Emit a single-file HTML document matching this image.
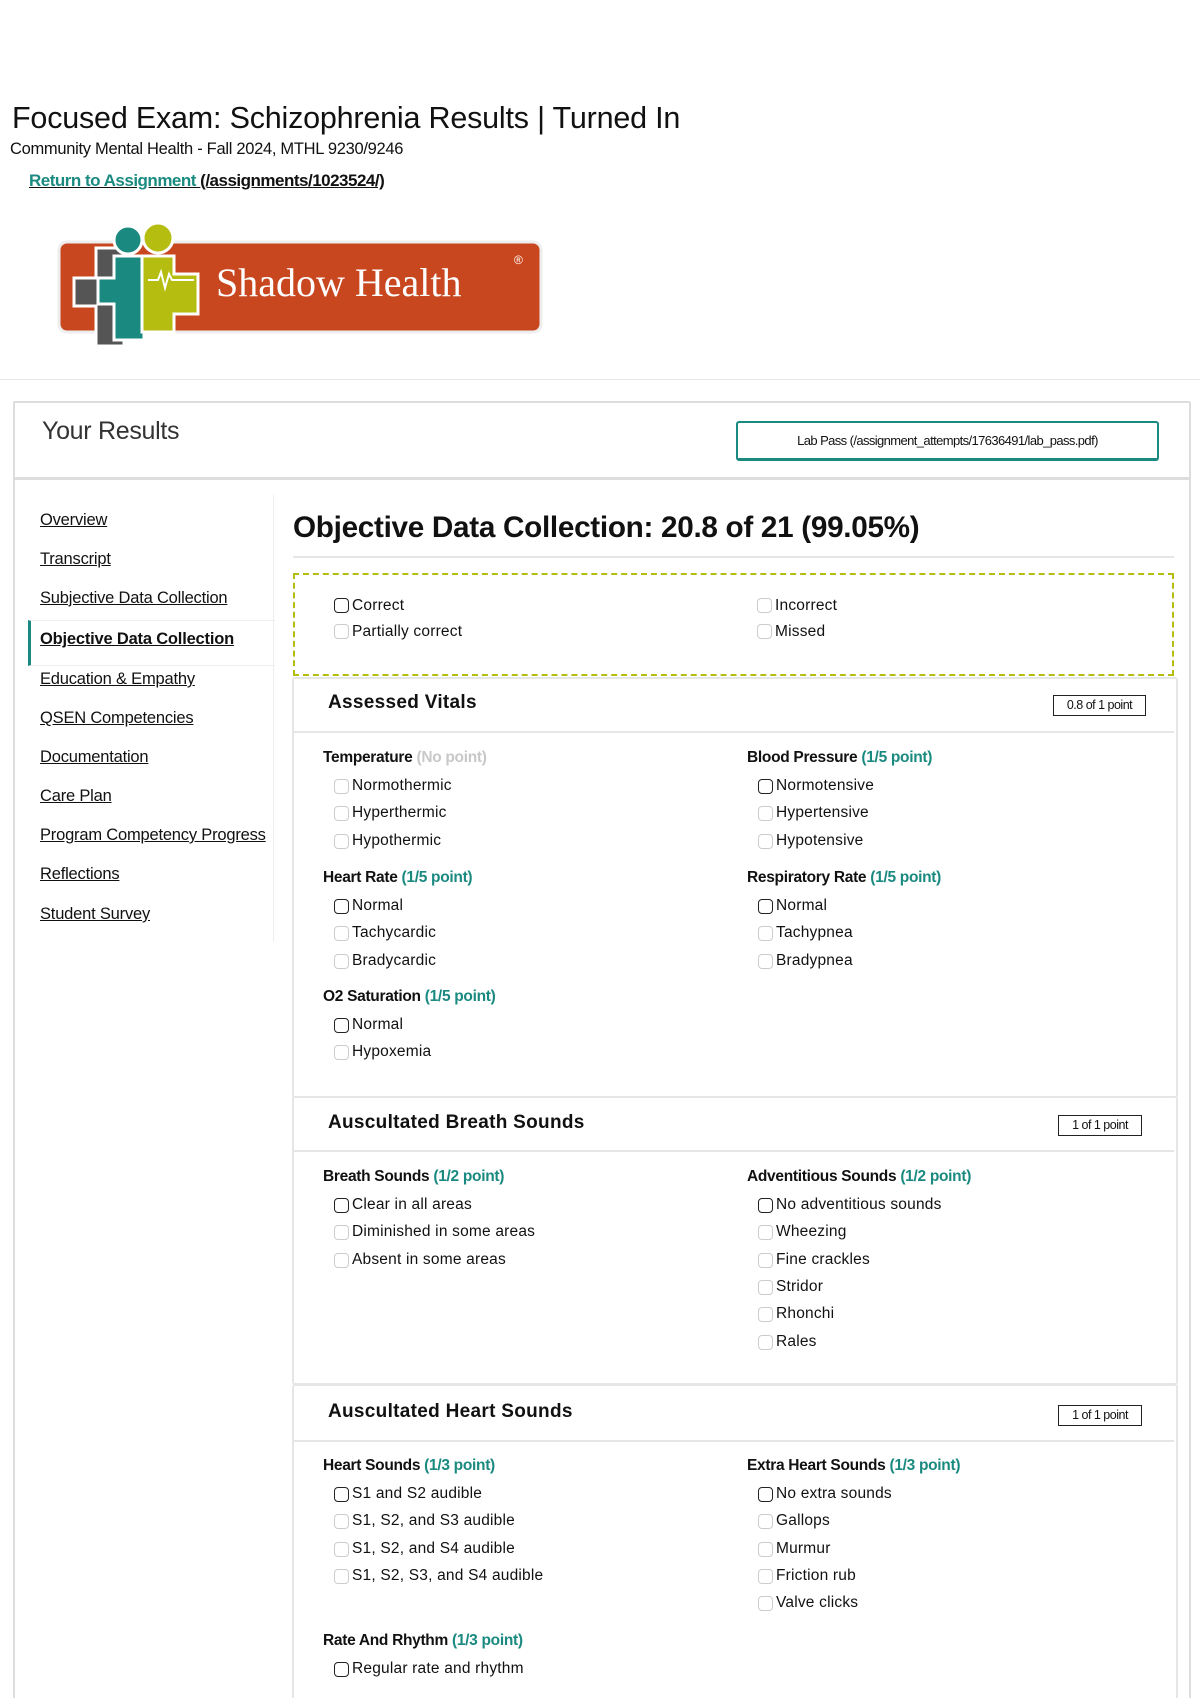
<!DOCTYPE html>
<html style="margin:0;height:1698px;overflow:hidden"><head><meta charset="utf-8"><style>
body{margin:0;width:1200px;height:1698px;background:#fff;font-family:"Liberation Sans",sans-serif;color:#111;overflow:hidden}
#w{position:relative;width:1200px;height:1698px;overflow:hidden}
.a{position:absolute;white-space:nowrap}
.cb{position:absolute;width:13px;height:13px;border:1.5px solid #ccc;border-radius:4px;background:#fff}
.cb.on{border-color:#222}
.t{font-size:15.5px;letter-spacing:0.2px}
.lbl{font-size:15.5px;font-weight:bold;letter-spacing:-0.3px}
.g{color:#1a8a80}
.gr{color:#c8c8c8}
.nav{font-size:16.5px;text-decoration:underline;color:#111;letter-spacing:-0.2px}
.badge{position:absolute;border:1.5px solid #222;font-size:12.5px;text-align:center;line-height:19px;letter-spacing:-0.5px}
.card{position:absolute;left:292px;width:882px;border:2px solid #e6e6e6;border-radius:3px}
.ct{font-size:19px;font-weight:bold;letter-spacing:0.3px}
</style></head><body><div id="w">
<div class="a" style="left:12px;top:101px;font-size:30.5px;letter-spacing:-0.2px">Focused Exam: Schizophrenia Results | Turned In</div>
<div class="a" style="left:10px;top:140px;font-size:16.5px;letter-spacing:-0.3px">Community Mental Health - Fall 2024, MTHL 9230/9246</div>
<div class="a" style="left:29px;top:171px;font-size:17px;font-weight:bold;text-decoration:underline;letter-spacing:-0.5px"><span style="color:#1a8a80">Return to Assignment </span>(/assignments/1023524/)</div>
<svg class="a" style="left:56px;top:218px" width="490" height="132" viewBox="0 0 490 132">
<rect x="3" y="24" width="482" height="90" rx="8" fill="#c8471f" stroke="#eee" stroke-width="3"/>
<path d="M40 30h28v30h18v28H68v40H40V88H18V60h22z" fill="#555" stroke="#fff" stroke-width="3"/>
<circle cx="72" cy="22" r="14" fill="#1a8a80" stroke="#fff" stroke-width="3"/>
<path d="M58 38h30v22h16v26H88v36H58V86H42V60h16z" fill="#1a8a80" stroke="#fff" stroke-width="3"/>
<circle cx="102" cy="20" r="15" fill="#b5bd10" stroke="#fff" stroke-width="3"/>
<path d="M86 38h32v18h24v40h-24v18H86z" fill="#b5bd10" stroke="#fff" stroke-width="3"/>
<path d="M92 62h10l3-8 4 16 4-14 3 6h22" fill="none" stroke="#fff" stroke-width="2"/>
<text x="160" y="78" font-family="Liberation Serif,serif" font-size="40" fill="#fff">Shadow Health</text>
<text x="458" y="46" font-size="12" fill="#fff">®</text>
</svg>
<div class="a" style="left:0;top:379px;width:1200px;height:1px;background:#e6e6e6"></div>
<div class="a" style="left:13px;top:401px;width:1174px;height:1400px;border:2px solid #ddd;border-radius:2px"></div>
<div class="a" style="left:42px;top:417px;font-size:25px;color:#333;letter-spacing:-0.3px">Your Results</div>
<div class="a" style="left:736px;top:421px;width:419px;height:35px;border:2px solid #1a8a80;border-bottom-width:3px;border-radius:3px;font-size:13px;line-height:35px;text-align:center;letter-spacing:-0.6px">Lab Pass (/assignment_attempts/17636491/lab_pass.pdf)</div>
<div class="a" style="left:15px;top:477px;width:1174px;height:3px;background:#ddd"></div>
<div class="a" style="left:273px;top:495px;width:1px;height:447px;background:#eee"></div>
<div class="a" style="left:28px;top:620px;width:244px;height:44px;border-left:3px solid #1a8a80;border-top:1px solid #eee;border-bottom:1px solid #eee"></div>
<div class="a nav" style="left:40px;top:511px">Overview</div>
<div class="a nav" style="left:40px;top:550px">Transcript</div>
<div class="a nav" style="left:40px;top:589px">Subjective Data Collection</div>
<div class="a nav" style="left:40px;top:630px;font-weight:bold">Objective Data Collection</div>
<div class="a nav" style="left:40px;top:670px">Education &amp; Empathy</div>
<div class="a nav" style="left:40px;top:709px">QSEN Competencies</div>
<div class="a nav" style="left:40px;top:748px">Documentation</div>
<div class="a nav" style="left:40px;top:787px">Care Plan</div>
<div class="a nav" style="left:40px;top:826px">Program Competency Progress</div>
<div class="a nav" style="left:40px;top:865px">Reflections</div>
<div class="a nav" style="left:40px;top:905px">Student Survey</div>
<div class="a" style="left:293px;top:511px;font-size:29.7px;font-weight:bold;letter-spacing:-0.3px">Objective Data Collection: 20.8 of 21 (99.05%)</div>
<div class="a" style="left:293px;top:556px;width:881px;height:2px;background:#e6e6e6"></div>
<div class="a" style="left:293px;top:573px;width:877px;height:99px;border:2px dashed #b5bd10"></div>
<div class="cb on" style="left:334px;top:598px"></div><div class="a t" style="left:352px;top:597px">Correct</div>
<div class="cb" style="left:334px;top:624px"></div><div class="a t" style="left:352px;top:623px">Partially correct</div>
<div class="cb" style="left:757px;top:598px"></div><div class="a t" style="left:775px;top:597px">Incorrect</div>
<div class="cb" style="left:757px;top:624px"></div><div class="a t" style="left:775px;top:623px">Missed</div>

<div class="card" style="top:677px;height:417px"></div>
<div class="a ct" style="left:328px;top:692px">Assessed Vitals</div>
<div class="badge" style="left:1053px;top:695px;width:91px">0.8 of 1 point</div>
<div class="a" style="left:294px;top:731px;width:880px;height:2px;background:#e6e6e6"></div>

<div class="card" style="top:1096px;height:285px"></div>
<div class="a ct" style="left:328px;top:1112px">Auscultated Breath Sounds</div>
<div class="badge" style="left:1058px;top:1115px;width:82px">1 of 1 point</div>
<div class="a" style="left:294px;top:1150px;width:880px;height:2px;background:#e6e6e6"></div>

<div class="card" style="top:1384px;height:400px"></div>
<div class="a ct" style="left:328px;top:1401px">Auscultated Heart Sounds</div>
<div class="badge" style="left:1058px;top:1405px;width:82px">1 of 1 point</div>
<div class="a" style="left:294px;top:1440px;width:880px;height:2px;background:#e6e6e6"></div>

<div id="items"></div>
</div>
<script>
var L=[
[323,758,'Temperature','<span class="gr">(No point)</span>',[['Normothermic',0],['Hyperthermic',0],['Hypothermic',0]]],
[747,758,'Blood Pressure','<span class="g">(1/5 point)</span>',[['Normotensive',1],['Hypertensive',0],['Hypotensive',0]]],
[323,878,'Heart Rate','<span class="g">(1/5 point)</span>',[['Normal',1],['Tachycardic',0],['Bradycardic',0]]],
[747,878,'Respiratory Rate','<span class="g">(1/5 point)</span>',[['Normal',1],['Tachypnea',0],['Bradypnea',0]]],
[323,997,'O2 Saturation','<span class="g">(1/5 point)</span>',[['Normal',1],['Hypoxemia',0]]],
[323,1177,'Breath Sounds','<span class="g">(1/2 point)</span>',[['Clear in all areas',1],['Diminished in some areas',0],['Absent in some areas',0]]],
[747,1177,'Adventitious Sounds','<span class="g">(1/2 point)</span>',[['No adventitious sounds',1],['Wheezing',0],['Fine crackles',0],['Stridor',0],['Rhonchi',0],['Rales',0]]],
[323,1466,'Heart Sounds','<span class="g">(1/3 point)</span>',[['S1 and S2 audible',1],['S1, S2, and S3 audible',0],['S1, S2, and S4 audible',0],['S1, S2, S3, and S4 audible',0]]],
[747,1466,'Extra Heart Sounds','<span class="g">(1/3 point)</span>',[['No extra sounds',1],['Gallops',0],['Murmur',0],['Friction rub',0],['Valve clicks',0]]],
[323,1641,'Rate And Rhythm','<span class="g">(1/3 point)</span>',[['Regular rate and rhythm',1]]]
];
var h='';
L.forEach(function(g){
h+='<div class="a lbl" style="left:'+g[0]+'px;top:'+(g[1]-9)+'px">'+g[2]+' '+g[3]+'</div>';
g[4].forEach(function(it,i){var y=g[1]+28+i*27.3;
h+='<div class="cb'+(it[1]?' on':'')+'" style="left:'+(g[0]+11)+'px;top:'+(y-7)+'px"></div><div class="a t" style="left:'+(g[0]+29)+'px;top:'+(y-9)+'px">'+it[0]+'</div>';});
});
document.getElementById('items').innerHTML=h;
</script>
</body></html>
